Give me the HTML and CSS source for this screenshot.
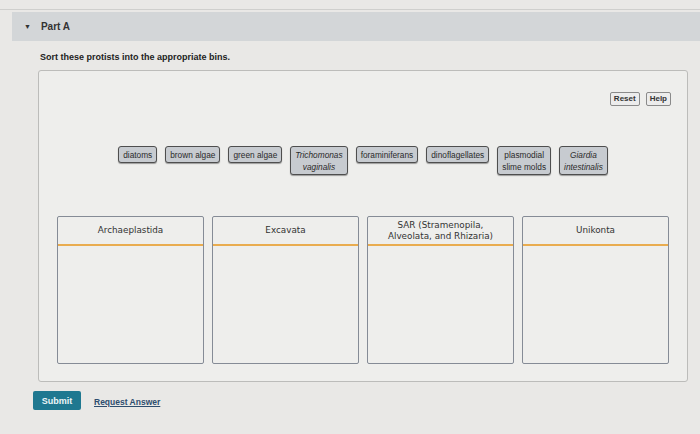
FILE: index.html
```html
<!DOCTYPE html>
<html lang="en">
<head>
  <meta charset="UTF-8">
  <title>Part A</title>
  <link rel="stylesheet" href="styles.css">
</head>
<body>
  <div class="topline"></div>
  <div class="part-head">
    <span class="caret">&#9660;</span>
    <span class="part-title">Part A</span>
  </div>

  <p class="prompt">Sort these protists into the appropriate bins.</p>

  <div class="workspace">
    <div class="tools">
      <button class="tool-btn">Reset</button>
      <button class="tool-btn">Help</button>
    </div>

    <div class="chips">
      <div class="chip">diatoms</div>
      <div class="chip">brown algae</div>
      <div class="chip">green algae</div>
      <div class="chip"><i>Trichomonas<br>vaginalis</i></div>
      <div class="chip">foraminiferans</div>
      <div class="chip">dinoflagellates</div>
      <div class="chip">plasmodial<br>slime molds</div>
      <div class="chip"><i>Giardia<br>intestinalis</i></div>
    </div>

    <div class="bins">
      <div class="bin">
        <div class="bin-head">Archaeplastida</div>
      </div>
      <div class="bin">
        <div class="bin-head">Excavata</div>
      </div>
      <div class="bin">
        <div class="bin-head">SAR (Stramenopila,<br>Alveolata, and Rhizaria)</div>
      </div>
      <div class="bin">
        <div class="bin-head">Unikonta</div>
      </div>
    </div>
  </div>

  <div class="actions">
    <button class="submit">Submit</button>
    <a class="request" href="#">Request Answer</a>
  </div>
</body>
</html>
```

FILE: styles.css
```css
body {
  margin: 0;
  background-color: #e9e8e6;
  font-family: "Liberation Sans", Arial, sans-serif;
  color: #222;
}
.topline {
  height: 9px;
  border-bottom: 1px solid #cfcfcd;
}
.part-head {
  margin-left: 12px;
  margin-top: 2px;
  height: 29px;
  background-color: #d3d6d8;
  display: flex;
  align-items: center;
  gap: 10px;
  padding-left: 12px;
}
.caret {
  font-size: 7px;
  color: #333;
}
.part-title {
  font-size: 10px;
  font-weight: bold;
  color: #333;
}
.prompt {
  margin: 11px 0 0 40px;
  font-size: 9px;
  font-weight: bold;
  color: #222;
}
.workspace {
  margin: 8px 0 0 38px;
  width: 650px;
  height: 312px;
  box-sizing: border-box;
  border: 1px solid #bcbcba;
  border-radius: 3px;
  background-color: #eeeeec;
}
.tools {
  display: flex;
  justify-content: flex-end;
  gap: 6px;
  padding: 21px 16px 0 0;
}
.tool-btn {
  font-family: "Liberation Sans", Arial, sans-serif;
  font-size: 8px;
  font-weight: bold;
  color: #333;
  background-color: #ececec;
  border: 1px solid #8a8a8a;
  border-radius: 2px;
  padding: 2px 3px;
  height: 14px;
  line-height: 8px;
}
.chips {
  display: flex;
  justify-content: center;
  align-items: flex-start;
  gap: 8px;
  margin-top: 40px;
}
.chip {
  font-size: 8.3px;
  line-height: 12px;
  color: #2a2a2a;
  text-align: center;
  background-color: #c7cbd0;
  border: 1px solid #4e4e4e;
  border-radius: 3px;
  box-shadow: 0 1px 1px rgba(0,0,0,0.35);
  padding: 1.5px 4px;
}
.bins {
  display: flex;
  justify-content: center;
  gap: 8px;
  margin-top: 41px;
}
.bin {
  width: 147px;
  height: 148px;
  box-sizing: border-box;
  border: 1px solid #858b96;
  border-radius: 2px;
  background-color: #eeeeec;
}
.bin-head {
  height: 27px;
  display: flex;
  align-items: center;
  justify-content: center;
  border-bottom: 2px solid #e9ac4f;
  font-family: "DejaVu Sans", Verdana, sans-serif;
  font-size: 8.8px;
  line-height: 11px;
  color: #333;
  text-align: center;
}
.actions {
  display: flex;
  align-items: center;
  gap: 13px;
  margin: 9px 0 0 33px;
}
.submit {
  font-family: "Liberation Sans", Arial, sans-serif;
  font-size: 9px;
  font-weight: bold;
  color: #eef6f8;
  background-color: #1f7890;
  border: none;
  border-radius: 2px;
  width: 48px;
  height: 19px;
}
.request {
  font-size: 8.5px;
  font-weight: bold;
  color: #2e4d6e;
  margin-top: 3px;
}
```
